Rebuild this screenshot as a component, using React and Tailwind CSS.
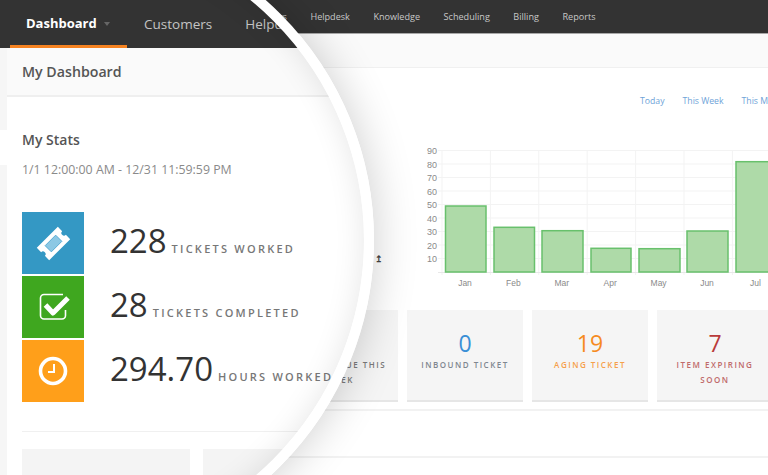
import React from 'react';

const font = "[font-family:'Open_Sans',sans-serif]";

const bars = [
  { x: 3.5, w: 40.5, top: 206 },
  { x: 52, w: 40.5, top: 227.3 },
  { x: 100, w: 41, top: 230.7 },
  { x: 149, w: 40, top: 248.3 },
  { x: 197, w: 41, top: 248.7 },
  { x: 245, w: 41, top: 231 },
  { x: 294, w: 41, top: 161.7 },
];
const months = ['Jan', 'Feb', 'Mar', 'Apr', 'May', 'Jun', 'Jul'];
const ticks = [90, 80, 70, 60, 50, 40, 30, 20, 10];

const BarChart = () => (
  <svg width="348" height="150" viewBox="420 145 348 150" className="block">
    {ticks.map((t, i) => (
      <g key={t}>
        <line x1="438" x2="768" y1={150.5 + i * 13.5} y2={150.5 + i * 13.5} stroke="#f3f3f3" />
        <text x="437" y={154 + i * 13.5} textAnchor="end" fontSize="9" fill="#8a8a8a" fontFamily="Liberation Sans">{t}</text>
      </g>
    ))}
    {[0, 1, 2, 3, 4, 5, 6, 7].map((i) => (
      <line key={i} x1={442 + i * 48.4} x2={442 + i * 48.4} y1="150" y2="275" stroke="#f3f3f3" />
    ))}
    <line x1="438" x2="768" y1="272.5" y2="272.5" stroke="#e8e8e8" />
    {bars.map((b) => (
      <rect key={b.x} x={442 + b.x} y={b.top} width={b.w} height={272 - b.top} fill="#aedaa8" stroke="#68c06c" strokeWidth="1.5" />
    ))}
    {months.map((m, i) => (
      <text key={m} x={465 + i * 48.4} y="286" textAnchor="middle" fontSize="8.5" fill="#8a8a8a" fontFamily="Liberation Sans">{m}</text>
    ))}
  </svg>
);

const SmallCard = ({ value, label, valueClass, labelClass }) => (
  <div className="w-[116px] h-[92px] shrink-0 bg-[#f5f5f5] border-b-2 border-[#e6e6e6] flex flex-col items-center pt-[18px] text-center">
    <div className={`text-[23px] leading-[30px] ${valueClass}`}>{value}</div>
    <div className={`text-[8px] leading-[14.5px] font-semibold tracking-[1.5px] px-1 ${labelClass}`}>{label}</div>
  </div>
);

const TicketIcon = () => (
  <svg width="35" height="35" viewBox="0 0 40 40">
    <g transform="rotate(-45 20 20)">
      <path fill="#fff" d="M3 10h34v7a3 3 0 0 0 0 6v7H3v-7a3 3 0 0 0 0-6z" />
      <rect x="11.5" y="15" width="17" height="10" fill="#8cc8e4" stroke="#4fa6d0" strokeWidth="1" />
    </g>
  </svg>
);

const CheckIcon = () => (
  <svg width="34" height="30" viewBox="0 0 34 30" fill="none" className="ml-[5px]">
    <path d="M26.5 18v5.5a3.5 3.5 0 0 1-3.5 3.5H5a3.5 3.5 0 0 1-3.5-3.5V6A3.5 3.5 0 0 1 5 2.5h19" stroke="#fff" strokeWidth="1.6" />
    <path d="M6.5 13l7.5 8L29 6" stroke="#fff" strokeWidth="5" strokeLinejoin="round" />
  </svg>
);

const ClockIcon = () => (
  <svg width="30" height="30" viewBox="0 0 30 30" fill="none">
    <circle cx="15" cy="15" r="12.5" stroke="#fff" strokeWidth="3.6" />
    <path d="M16 8v8H10" stroke="#fff" strokeWidth="2" />
  </svg>
);

const StatRow = ({ color, icon, value, label }) => (
  <div className="flex items-center gap-[26px]">
    <div className={`w-[62px] h-[62px] flex items-center justify-center ${color}`}>{icon}</div>
    <div className="flex items-baseline mb-[4px]">
      <span className="text-[33px] leading-none font-medium text-[#333]">{value}</span>
      <span className="ml-[5px] text-[11px] font-semibold tracking-[2.24px] text-[#777]">{label}</span>
    </div>
  </div>
);

const Lens = () => (
  <div className="absolute inset-0 bg-white [clip-path:circle(311px_at_54px_240px)]">
    {/* NAV */}
    <div className="h-[48px] bg-[#333] flex">
      <div className="w-[117px] ml-[10px] pl-[16px] pt-[2px] border-b-[3px] border-[#f58220] flex items-center gap-[7px]">
        <span className="text-[13px] font-bold text-white">Dashboard</span>
        <span className="w-0 h-0 border-x-[3.5px] border-x-transparent border-t-[4px] border-t-[#666]" />
      </div>
      <div className="pl-[17px] flex items-center gap-[33px] text-[13.5px] text-[#c4c4c4]">
        <span>Customers</span>
        <span>Helpdesk</span>
      </div>
    </div>

    <div className="flex h-[427px]">
      {/* Sidebar strip */}
      <div className="w-[7px] flex flex-col">
        <div className="h-[82px] bg-[#f6f6f6]" />
        <div className="h-[35px] bg-white" />
        <div className="flex-1 bg-[#f6f6f6]" />
      </div>

      <div className="flex-1 flex flex-col">
        <div className="h-[49px] shrink-0 bg-[#fafafa] border-b-2 border-[#efefef] pl-[15px] flex items-center text-[14.2px] font-semibold text-[#555]">
          My Dashboard
        </div>

        <div className="pl-[15px]">
          <div className="mt-[33px] text-[14px] leading-[20px] font-semibold text-[#555]">My Stats</div>
          <div className="mt-[10px] text-[12.35px] leading-[20px] text-[#8a8a8a]">1/1 12:00:00 AM - 12/31 11:59:59 PM</div>

          <div className="mt-[32px] flex flex-col gap-[2px]">
            <StatRow color="bg-[#3498c4]" icon={<TicketIcon />} value="228" label="TICKETS WORKED" />
            <StatRow color="bg-[#3fa71f]" icon={<CheckIcon />} value="28" label="TICKETS COMPLETED" />
            <StatRow color="bg-[#ff9f1a]" icon={<ClockIcon />} value="294.70" label="HOURS WORKED" />
          </div>

          <div className="mt-[29px] h-px bg-[#f0f0f0]" />

          <div className="mt-[17px] flex gap-[13px]">
            <div className="w-[168px] h-[40px] bg-[#f4f4f4]" />
            <div className="w-[300px] h-[40px] bg-[#f4f4f4]" />
          </div>
        </div>
      </div>
    </div>
  </div>
);

export default function App() {
  return (
    <div className={`relative w-[768px] h-[475px] overflow-hidden bg-white ${font}`}>
      {/* TOP NAV */}
      <div className="h-[34px] bg-[#333] border-b border-[#a8a8a8] flex items-center pl-[241px] gap-[23.5px] text-[9.1px] text-[#c8c8c8]">
        <span>Customers</span>
        <span>Helpdesk</span>
        <span>Knowledge</span>
        <span>Scheduling</span>
        <span>Billing</span>
        <span>Reports</span>
      </div>

      {/* Sub header */}
      <div className="h-[34px] bg-[#fafafa] border-b border-[#f0f0f0]" />

      {/* Date links */}
      <div className="pt-[27px] pl-[640px] flex gap-[18px] text-[8.7px] leading-[12px] text-[#6ea3d8] whitespace-nowrap">
        <span>Today</span>
        <span>This Week</span>
        <span>This Month</span>
      </div>

      <div className="flex h-[203px] pt-[38px] pl-[375px]">
        <div className="w-[45px] pt-[109px] text-[9px] font-bold leading-none text-[#444]">↥</div>
        <BarChart />
      </div>

      {/* Summary cards */}
      <div className="flex gap-[9px] pl-[282px]">
        <SmallCard value="12" label="TICKETS DUE THIS WEEK" valueClass="text-[#3a8fd6]" labelClass="text-[#7a7a7a]" />
        <SmallCard value="0" label="INBOUND TICKET" valueClass="text-[#3a8fd6]" labelClass="text-[#7f8790]" />
        <SmallCard value="19" label="AGING TICKET" valueClass="text-[#f68b1f]" labelClass="text-[#f5a04a]" />
        <SmallCard value="7" label="ITEM EXPIRING SOON" valueClass="text-[#b93a3a]" labelClass="text-[#c06a6a]" />
      </div>

      <div className="mt-[7px] h-[2px] bg-[#f2f2f2]" />
      <div className="mt-[45px] h-[2px] bg-[#f2f2f2]" />

      {/* Magnifier */}
      <Lens />
      <div className="absolute left-[-266px] top-[-80px] w-[640px] h-[640px] rounded-full border-[10px] border-white shadow-[0_0_45px_rgba(0,0,0,0.2),inset_0_0_30px_rgba(0,0,0,0.1)]" />
    </div>
  );
}
